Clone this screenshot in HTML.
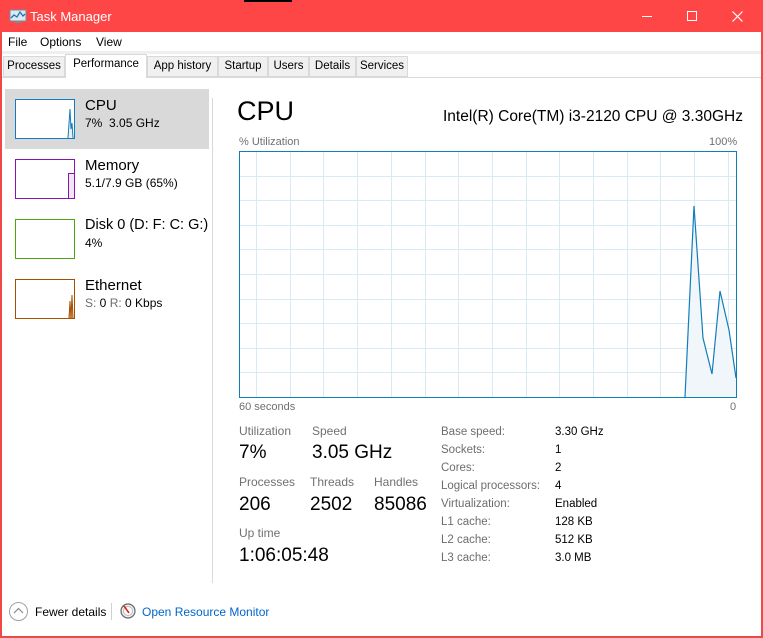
<!DOCTYPE html>
<html><head><meta charset="utf-8"><style>
*{margin:0;padding:0;box-sizing:border-box}
body{width:763px;height:638px;overflow:hidden;background:#fff;font-family:"Liberation Sans",sans-serif;position:relative;color:#000}
.a{position:absolute;white-space:nowrap}
.g{color:#6d6d6d}
.tab{position:absolute;top:56px;height:21px;background:#f0f0f0;border:1px solid #d9d9d9;font-size:11.5px;padding:3px 0 0 0;text-align:center}
.th{font-size:12px;color:#707070}
.lbl{font-size:11.5px;color:#6d6d6d}
.val{font-size:11.5px}
</style></head><body>
<div class="a" style="left:0;top:0;width:763px;height:638px;border:1px solid #f04848;border-width:0 2px 2px 2px"></div>
<div class="a" style="left:0;top:0;width:763px;height:32px;background:#ff4646"></div>
<div class="a" style="left:244px;top:0;width:48px;height:2px;background:#000"></div>
<svg class="a" style="left:9px;top:9px" width="18" height="15" viewBox="0 0 18 15"><rect x="1" y="1" width="16" height="11" fill="#dfe8f0" stroke="#7a8a99"/><polyline points="2,9 5,6 8,8 11,3 14,7 16,5" fill="none" stroke="#1a7ab8" stroke-width="1.3"/><rect x="6" y="12" width="6" height="2" fill="#7a8a99"/></svg>
<div class="a" style="left:30px;top:9px;font-size:13px;color:#fff">Task Manager</div>
<div class="a" style="left:642px;top:16px;width:10px;height:1px;background:#fff"></div>
<div class="a" style="left:687px;top:11px;width:10px;height:10px;border:1px solid #fff"></div>
<svg class="a" style="left:732px;top:11px" width="11" height="11"><path d="M0.5 0.5L10.5 10.5M10.5 0.5L0.5 10.5" stroke="#fff" stroke-width="1.2"/></svg>
<div class="a" style="left:8px;top:35px;font-size:12px">File</div>
<div class="a" style="left:40px;top:35px;font-size:12px">Options</div>
<div class="a" style="left:96px;top:35px;font-size:12px">View</div>
<div class="a" style="left:2px;top:51px;width:759px;height:3px;background:#efefef"></div>
<div class="a" style="left:2px;top:77px;width:759px;height:1px;background:#d9d9d9"></div>
<div class="tab" style="left:3px;width:62px">Processes</div>
<div class="tab" style="left:65px;top:54px;width:82px;height:24px;background:#fff;border-bottom:none">Performance</div>
<div class="tab" style="left:147px;width:71px">App history</div>
<div class="tab" style="left:218px;width:50px">Startup</div>
<div class="tab" style="left:268px;width:41px">Users</div>
<div class="tab" style="left:309px;width:47px">Details</div>
<div class="tab" style="left:356px;width:52px">Services</div>
<div class="a" style="left:212px;top:98px;width:1px;height:485px;background:#d9d9d9"></div>
<div class="a" style="left:5px;top:89px;width:204px;height:60px;background:#d9d9d9"></div>
<div class="a" style="left:15px;top:99px;width:60px;height:40px;background:#fff;border:1px solid #117dbb"></div>
<svg class="a" style="left:15px;top:99px" width="60" height="40"><polyline points="53,39 55,10 56,30 57,24 58,39" fill="#e8f1f8" stroke="#117dbb"/></svg>
<div class="a" style="left:85px;top:97px;font-size:15px">CPU</div>
<div class="a" style="left:85px;top:116px;font-size:12px">7%&nbsp; 3.05 GHz</div>
<div class="a" style="left:15px;top:159px;width:60px;height:40px;border:1px solid #8b12ae"></div>
<div class="a" style="left:68px;top:173px;width:6px;height:25px;background:#f1e6f4;border-left:1px solid #8b12ae;border-top:1px solid #8b12ae"></div>
<div class="a" style="left:85px;top:157px;font-size:15px">Memory</div>
<div class="a" style="left:85px;top:176px;font-size:12px">5.1/7.9 GB (65%)</div>
<div class="a" style="left:15px;top:219px;width:60px;height:40px;border:1px solid #4da60c"></div>
<div class="a" style="left:85px;top:217px;font-size:14.5px">Disk 0 (D: F: C: G:)</div>
<div class="a" style="left:85px;top:236px;font-size:12px">4%</div>
<div class="a" style="left:15px;top:279px;width:60px;height:40px;border:1px solid #a74f01"></div>
<svg class="a" style="left:15px;top:279px" width="60" height="40"><polyline points="54,39 55,22 56,39 57,16 58,39" fill="#e0b080" stroke="#a74f01"/></svg>
<div class="a" style="left:85px;top:277px;font-size:15px">Ethernet</div>
<div class="a" style="left:85px;top:296px;font-size:12px"><span class="g">S:</span> 0 <span class="g">R:</span> 0 Kbps</div>
<div class="a" style="left:237px;top:96px;font-size:27px">CPU</div>
<div class="a" style="left:443px;top:108px;font-size:15.5px">Intel(R) Core(TM) i3-2120 CPU @ 3.30GHz</div>
<div class="a th" style="left:239px;top:136px;font-size:11px">% Utilization</div>
<div class="a th" style="left:709px;top:136px;font-size:11px">100%</div>
<svg class="a" style="left:239px;top:151px" width="498" height="247" viewBox="239 151 498 247">
<g stroke="#d9eaf4" stroke-width="1">
<path d="M256.5 151V397M290.5 151V397M323.5 151V397M357.5 151V397M391.5 151V397M425.5 151V397M458.5 151V397M492.5 151V397M526.5 151V397M559.5 151V397M593.5 151V397M627.5 151V397M660.5 151V397M694.5 151V397M728.5 151V397"/>
<path d="M239 176.5H737M239 200.5H737M239 225.5H737M239 249.5H737M239 274.5H737M239 299.5H737M239 323.5H737M239 348.5H737M239 372.5H737"/>
</g>
<polygon points="685,397 694,206 703,338 712,374 720,291 729,330 736,378 736,397" fill="#f1f6fa"/>
<polyline points="685,397 694,206 703,338 712,374 720,291 729,330 736,378" fill="none" stroke="#117dbb" stroke-width="1.2"/>
<rect x="239.5" y="151.5" width="497" height="246" fill="none" stroke="#117dbb"/>
</svg>
<div class="a th" style="left:239px;top:401px;font-size:11px">60 seconds</div>
<div class="a th" style="left:730px;top:401px;font-size:11px">0</div>
<div class="a th" style="left:239px;top:424px">Utilization</div>
<div class="a th" style="left:312px;top:424px">Speed</div>
<div class="a" style="left:239px;top:442px;font-size:19px">7%</div>
<div class="a" style="left:312px;top:442px;font-size:19px">3.05 GHz</div>
<div class="a th" style="left:239px;top:475px">Processes</div>
<div class="a th" style="left:310px;top:475px">Threads</div>
<div class="a th" style="left:374px;top:475px">Handles</div>
<div class="a" style="left:239px;top:494px;font-size:19px">206</div>
<div class="a" style="left:310px;top:494px;font-size:19px">2502</div>
<div class="a" style="left:374px;top:494px;font-size:19px">85086</div>
<div class="a th" style="left:239px;top:526px">Up time</div>
<div class="a" style="left:239px;top:545px;font-size:19px">1:06:05:48</div>
<div class="a lbl" style="left:441px;top:423px;line-height:18px">Base speed:<br>Sockets:<br>Cores:<br>Logical processors:<br>Virtualization:<br>L1 cache:<br>L2 cache:<br>L3 cache:</div>
<div class="a val" style="left:555px;top:423px;line-height:18px">3.30 GHz<br>1<br>2<br>4<br>Enabled<br>128 KB<br>512 KB<br>3.0 MB</div>
<div class="a" style="left:9px;top:602px;width:19px;height:19px;border:1px solid #a0a0a0;border-radius:50%"></div>
<svg class="a" style="left:13px;top:607px" width="11" height="8"><polyline points="1,6 5.5,1.5 10,6" fill="none" stroke="#888" stroke-width="1.2"/></svg>
<div class="a" style="left:35px;top:605px;font-size:12px">Fewer details</div>
<div class="a" style="left:111px;top:603px;width:1px;height:17px;background:#d0d0d0"></div>
<svg class="a" style="left:120px;top:603px" width="16" height="16"><circle cx="8" cy="8" r="7" fill="#eee" stroke="#666" stroke-width="1.2"/><circle cx="8" cy="8" r="4.5" fill="#fff" stroke="#bbb"/><line x1="4" y1="3" x2="9" y2="10" stroke="#d22" stroke-width="1.6"/></svg>
<div class="a" style="left:142px;top:605px;font-size:12px;color:#0066cc">Open Resource Monitor</div>
</body></html>
